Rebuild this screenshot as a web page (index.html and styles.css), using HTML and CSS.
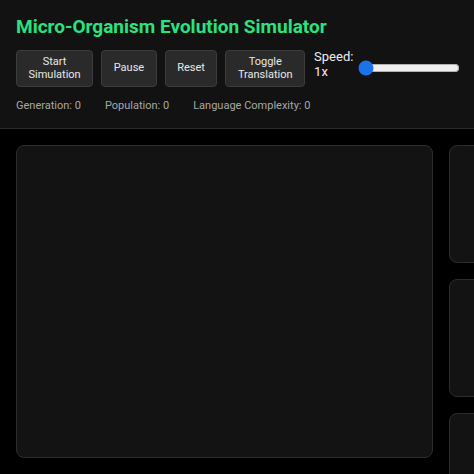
FILE: index.html
```html
<!DOCTYPE html>
<html lang="en">
<head>
<meta charset="utf-8">
<title>Micro-Organism Evolution Simulator</title>
<link rel="stylesheet" href="styles.css">
</head>
<body>
<header class="header">
  <h1 class="title">Micro-Organism Evolution Simulator</h1>
  <div class="controls">
    <button class="btn">Start<br>Simulation</button>
    <button class="btn">Pause</button>
    <button class="btn">Reset</button>
    <button class="btn">Toggle<br>Translation</button>
    <label class="speed-label">Speed:<br>1x</label>
    <input class="speed" type="range" min="1" max="10" value="1">
  </div>
  <div class="stats">
    <span>Generation: 0</span>
    <span>Population: 0</span>
    <span>Language Complexity: 0</span>
  </div>
</header>
<main class="main">
  <div class="canvas-box"></div>
  <aside class="side">
    <div class="panel"></div>
    <div class="panel"></div>
    <div class="panel"></div>
  </aside>
</main>
</body>
</html>
```
FILE: styles.css
```css
html, body {
  margin: 0;
  padding: 0;
  background: #000;
  color: #e6e6e6;
  font-family: Roboto, "Noto Sans", sans-serif;
  overflow: hidden;
  height: 100%;
}
.header {
  background: #121212;
  border-bottom: 1px solid #2a2a2a;
  padding: 15px 16px 15px;
}
.title {
  margin: 0 0 12px;
  font-size: 19px;
  font-weight: 700;
  line-height: 23px;
  color: #2ae37f;
}
.controls {
  display: flex;
  align-items: stretch;
  gap: 8px;
}
.btn {
  background: #2a2a2a;
  border: 1px solid #3c3c3c;
  border-radius: 4px;
  color: #e8e8e8;
  font-family: Roboto, "Noto Sans", sans-serif;
  font-size: 11px;
  line-height: 12.5px;
  padding: 0 11.5px;
  height: 37px;
  flex: none;
}
.speed-label {
  font-size: 13px;
  line-height: 15px;
  color: #eee;
  margin-left: 1px;
  align-self: flex-start;
  margin-top: -1px;
}
.speed {
  flex: 1 1 auto;
  min-width: 0;
  width: 100px;
  margin: -2px -2px 0 -3px;
  align-self: center;
  accent-color: #1a73e8;
}
.stats {
  display: flex;
  gap: 24px;
  margin-top: 12px;
  font-size: 11px;
  line-height: 14px;
  color: #a8a8a8;
}
.main {
  display: grid;
  grid-template-columns: 417px 300px;
  gap: 16px;
  padding: 16px;
}
.canvas-box {
  height: 313px;
  box-sizing: border-box;
  background: #131313;
  border: 1px solid #2c2c2c;
  border-radius: 8px;
}
.side {
  display: flex;
  flex-direction: column;
  gap: 16px;
}
.panel {
  height: 118px;
  box-sizing: border-box;
  background: #131313;
  border: 1px solid #2c2c2c;
  border-radius: 8px;
}
```
